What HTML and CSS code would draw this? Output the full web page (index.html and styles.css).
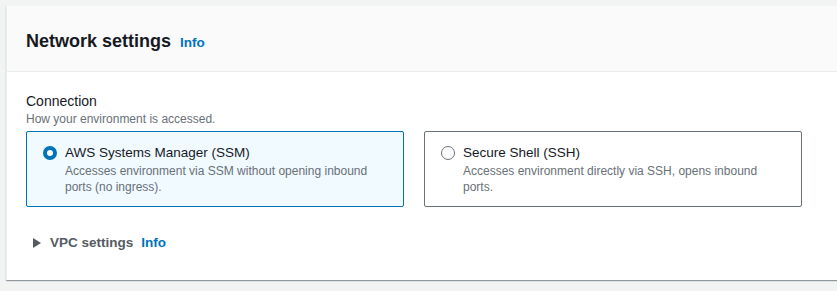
FILE: index.html
```html
<!DOCTYPE html>
<html lang="en">
<head>
    <meta charset="UTF-8">
    <title>Network settings</title>
    <link rel="stylesheet" href="styles.css">
</head>
<body>
    <div class="painel">
        <div class="painel-header">
            <h2>Network settings</h2>
            <a href="#" class="info">Info</a>
        </div>

        <div class="painel-corpo">
            <div class="campo-label">Connection</div>
            <div class="campo-desc">How your environment is accessed.</div>

            <div class="opcoes">
                <label class="opcao selecionada">
                    <span class="radio marcado"></span>
                    <span class="opcao-texto">
                        <span class="opcao-titulo">AWS Systems Manager (SSM)</span>
                        <span class="opcao-desc">Accesses environment via SSM without opening inbound ports (no ingress).</span>
                    </span>
                </label>
                <label class="opcao">
                    <span class="radio"></span>
                    <span class="opcao-texto">
                        <span class="opcao-titulo">Secure Shell (SSH)</span>
                        <span class="opcao-desc">Accesses environment directly via SSH, opens inbound ports.</span>
                    </span>
                </label>
            </div>

            <div class="expansivel">
                <svg class="seta" width="8" height="10" viewBox="0 0 8 10"><path d="M0 0 L8 5 L0 10 Z" fill="#545b64"/></svg>
                <span class="expansivel-titulo">VPC settings</span>
                <a href="#" class="info">Info</a>
            </div>
        </div>
    </div>
</body>
</html>
```

FILE: styles.css
```css
* {
    box-sizing: border-box;
}

body {
    margin: 0;
    padding: 6px 0 0 6px;
    background: #f2f3f3;
    font-family: 'Liberation Sans', Arial, sans-serif;
    color: #16191f;
    overflow: hidden;
    height: 291px;
}

.painel {
    width: 860px;
    background: #fff;
    border-left: 1px solid #eaeded;
    box-shadow: 0 1px 1px 0 rgba(0, 28, 36, 0.3), 1px 1px 1px 0 rgba(0, 28, 36, 0.15);
}

.painel-header {
    display: flex;
    align-items: baseline;
    gap: 9px;
    height: 66px;
    padding: 24px 0 0 19px;
    background: #fafafa;
    border-bottom: 1px solid #eaeded;
}

.painel-header h2 {
    margin: 0;
    font-size: 18px;
    font-weight: bold;
    line-height: 22px;
}

.info {
    color: #0073bb;
    font-size: 13.5px;
    font-weight: bold;
    text-decoration: none;
}

.painel-corpo {
    padding: 19px 0 30px 19px;
}

.campo-label {
    font-size: 14px;
    line-height: 20px;
}

.campo-desc {
    font-size: 12px;
    color: #687078;
    line-height: 16px;
}

.opcoes {
    display: flex;
    gap: 20px;
    margin-top: 4px;
}

.opcao {
    display: flex;
    gap: 8px;
    width: 378px;
    height: 76px;
    padding: 11px 16px 0 16px;
    border: 1px solid #687078;
    border-radius: 2px;
    background: #fff;
    cursor: pointer;
}

.opcao.selecionada {
    border-color: #0073bb;
    background: #f1faff;
}

.radio {
    flex-shrink: 0;
    width: 14px;
    height: 14px;
    margin-top: 3px;
    border: 1px solid #687078;
    border-radius: 50%;
    background: #fff;
}

.radio.marcado {
    border: 4px solid #0073bb;
}

.opcao-texto {
    display: flex;
    flex-direction: column;
}

.opcao-titulo {
    font-size: 13.5px;
    line-height: 20px;
}

.opcao-desc {
    font-size: 12px;
    line-height: 16px;
    color: #687078;
    max-width: 315px;
}

.expansivel {
    display: flex;
    align-items: center;
    gap: 8px;
    margin-top: 28px;
    padding-left: 7px;
}

.seta {
    margin-right: 1px;
}

.expansivel-titulo {
    font-size: 13.5px;
    font-weight: bold;
    color: #545b64;
}
```
